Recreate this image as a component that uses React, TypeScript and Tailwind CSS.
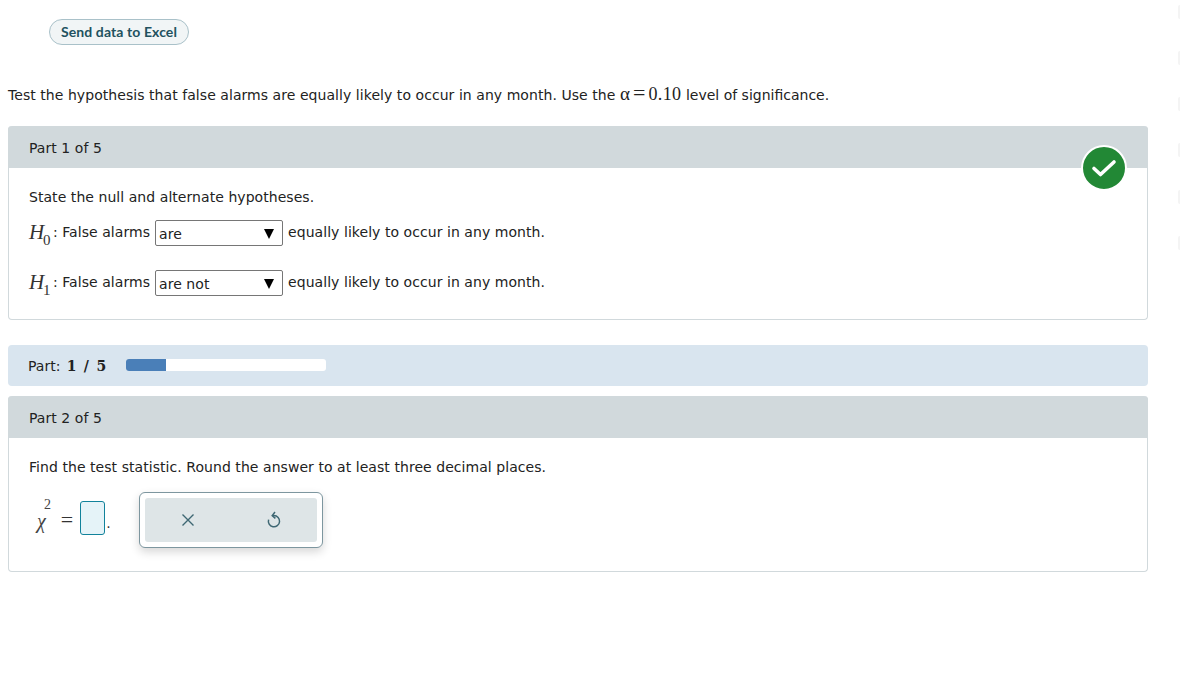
import { FC } from "react";

const FakeSelect: FC<{ value: string }> = ({ value }) => (
  <div className="mx-[5px] flex h-[26px] w-[128px] items-center justify-between rounded-[2px] border border-[#767676] pl-[3px] pr-[8px] pt-[1px] text-[#222]">
    <span>{value}</span>
    <span className="h-0 w-0 border-x-[5px] border-t-[10px] border-x-transparent border-t-black" />
  </div>
);

const Hypothesis: FC<{ sub: string; value: string }> = ({ sub, value }) => (
  <div className="flex h-[26px] items-center">
    <span className="-mt-[1px] w-[14px] font-['Liberation_Serif'] text-[21px] italic text-[#333]">H</span>
    <span className="mt-[14px] w-[7px] font-['Liberation_Serif'] text-[15px] text-[#333]">{sub}</span>
    <span className="-mt-[2px] ml-[3px]">: False alarms</span>
    <FakeSelect value={value} />
    <span className="-mt-[2px]">equally likely to occur in any month.</span>
  </div>
);

const CardHeader: FC<{ title: string }> = ({ title }) => (
  <div className="flex h-[42px] items-center rounded-t-[4px] bg-[#d1d9dc] pl-[21px] pt-[2px] text-[#222]">{title}</div>
);

const edgeMarks = [5, 51, 97, 143, 190, 236];

export default function App() {
  return (
    <div className="relative h-[679px] overflow-hidden bg-white pl-[8px] pt-[19px] font-['DejaVu_Sans'] text-[14px] leading-none tracking-[0.055px] text-[#222]">
      {edgeMarks.map((top) => (
        <span key={top} className="absolute right-0 h-[14px] w-[2px] rounded-l-full bg-[#f4f4f4]" style={{ top }} />
      ))}

      <button className="ml-[41px] flex h-[26px] w-[140px] items-center justify-center rounded-full border border-[#a9c1c9] bg-[#f1f5f6] font-['Lato'] text-[14px] font-bold tracking-[0.1px] text-[#22525f]">
        Send data to Excel
      </button>

      <p className="mt-[41px] h-[14px] whitespace-pre leading-[14px]">
        Test the hypothesis that false alarms are equally likely to occur in any month. Use the{" "}
        <span className="font-['Liberation_Serif'] text-[19px]">α</span>
        <span className="ml-[3px] mr-[3px] font-['Liberation_Serif'] text-[22px] leading-[14px]">=</span>
        <span className="font-['Liberation_Serif'] text-[18px] tracking-[0.4px]">0.10</span>
        <span className="tracking-normal"> level of significance.</span>
      </p>

      <section className="relative mt-[26px] h-[194px] w-[1140px] rounded-[4px] border-x border-b border-[#d1d9dc]">
        <div className="-mx-px">
          <CardHeader title="Part 1 of 5" />
        </div>
        <p className="ml-[20px] mt-[22px]">State the null and alternate hypotheses.</p>
        <div className="ml-[20px] mt-[16px] flex flex-col gap-[24px]">
          <Hypothesis sub="0" value="are" />
          <Hypothesis sub="1" value="are not" />
        </div>
        <div className="absolute left-[1072px] top-[19px] flex h-[46px] w-[46px] items-center justify-center rounded-full border-[2px] border-white bg-[#228835]">
          <svg width="30" height="30" viewBox="0 0 30 30" fill="none" stroke="white" strokeWidth="3.6" strokeLinecap="round" strokeLinejoin="round">
            <path d="M5 15.5 L11.5 21.5 L25 9" />
          </svg>
        </div>
      </section>

      <div className="mt-[25px] flex h-[41px] w-[1140px] items-center rounded-[4px] bg-[#d9e5ef] pl-[20px]">
        <span>Part:</span>
        <span className="ml-[6px] font-['DejaVu_Serif'] font-bold [word-spacing:2.5px]">1 / 5</span>
        <div className="-mt-[2px] ml-[20px] h-[12px] w-[200px] overflow-hidden rounded-[3px] bg-white">
          <div className="h-full w-[40px] bg-[#4a7fb8]" />
        </div>
      </div>

      <section className="mt-[10px] h-[176px] w-[1140px] rounded-[4px] border-x border-b border-[#d1d9dc]">
        <div className="-mx-px">
          <CardHeader title="Part 2 of 5" />
        </div>
        <p className="ml-[20px] mt-[22px]">Find the test statistic. Round the answer to at least three decimal places.</p>
        <div className="ml-[28px] mt-[18px] flex items-center">
          <div className="relative flex h-[56px] items-center">
            <span className="mt-[2px] font-['Liberation_Serif'] text-[20px] font-light italic text-[#444]">χ</span>
            <span className="absolute left-[7px] top-[6px] font-['Liberation_Serif'] text-[14px] text-[#444]">2</span>
            <span className="ml-[15px] font-['Liberation_Serif'] text-[22px] text-[#333]">=</span>
          </div>
          <div className="-mt-[4px] ml-[7px] h-[34px] w-[25px] rounded-[3px] border border-[#11829b] bg-[#e5f3f8]" />
          <span className="ml-[1px] mt-[6px] text-[#333]">.</span>
          <div className="ml-[28px] flex h-[56px] w-[184px] items-center rounded-[6px] border border-[#7d969f] bg-white p-[5px] shadow-[0_4px_10px_rgba(0,0,0,0.16)]">
            <div className="flex h-[44px] w-full items-center rounded-[3px] bg-[#dee5e7]">
              <svg className="ml-[35px]" width="16" height="16" viewBox="0 0 16 16" fill="none" stroke="#3e6773" strokeWidth="1.4">
                <path d="M2.5 2.5 L13.5 13.5 M13.5 2.5 L2.5 13.5" />
              </svg>
              <svg className="ml-[70px]" width="16" height="18" viewBox="0 0 16 18" fill="none" stroke="#3e6773" strokeWidth="1.5">
                <path d="M7 4.6 H8 A5.6 5.6 0 1 1 2.6 8.6" />
                <path d="M9 1 L6.2 4.6 L9.4 7.4" />
              </svg>
            </div>
          </div>
        </div>
      </section>
    </div>
  );
}
